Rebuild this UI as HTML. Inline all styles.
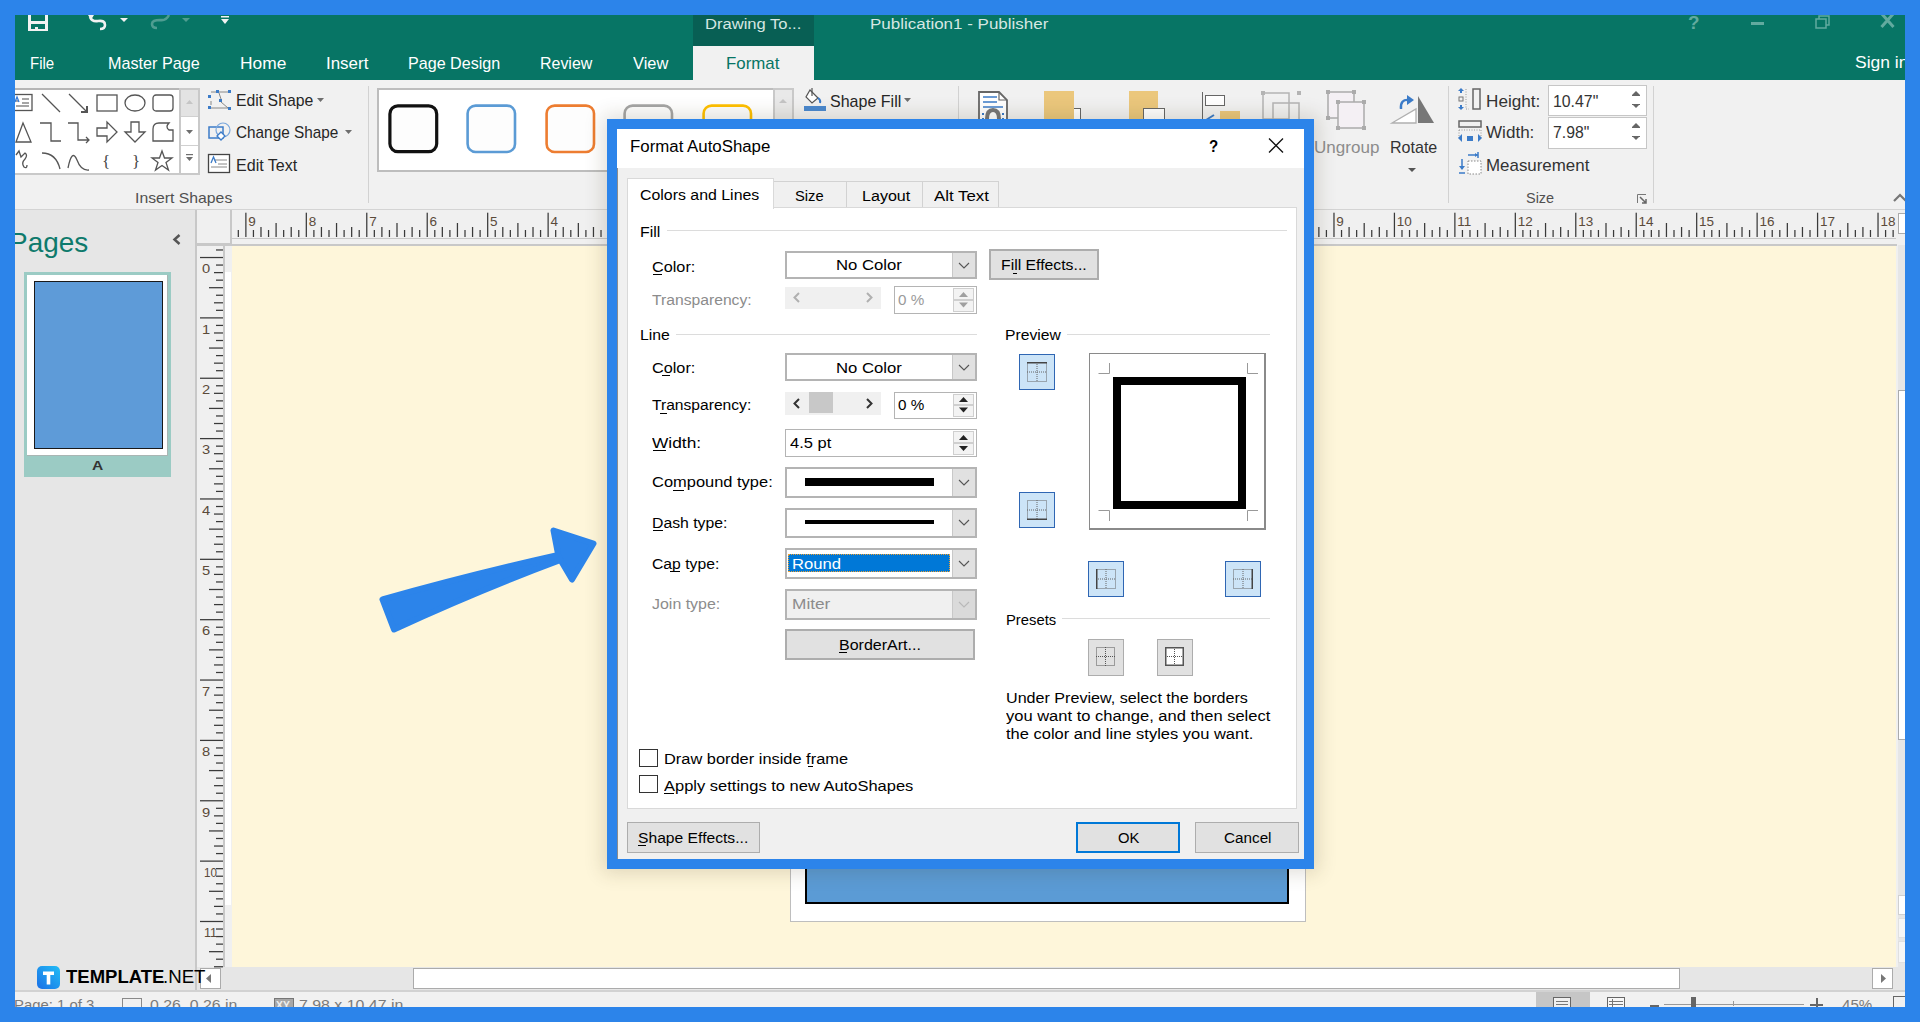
<!DOCTYPE html>
<html><head><meta charset="utf-8">
<style>
*{margin:0;padding:0;box-sizing:border-box}
html,body{width:1920px;height:1022px;overflow:hidden;background:#2C84EA}
body{position:relative;font-family:"Liberation Sans",sans-serif;color:#000}
.a{position:absolute}
.t{position:absolute;white-space:nowrap;line-height:1;transform-origin:0 0}
svg{overflow:visible}
</style></head><body>
<div class="a" style="left:15px;top:15px;width:1890px;height:65px;background:#077565;"></div>
<div class="a" style="left:693px;top:15px;width:121px;height:31px;background:#085F54;"></div>
<div class="a" style="left:693px;top:46px;width:121px;height:34px;background:#F1F1F1;"></div>
<div class="a" style="left:15px;top:80px;width:1890px;height:129px;background:#F1F1F1;"></div>
<div class="a" style="left:15px;top:209px;width:1890px;height:1px;background:#D4D4D4;"></div>
<div class="a" style="left:15px;top:210px;width:181px;height:782px;background:#E6E6E6;"></div>
<div class="a" style="left:197px;top:210px;width:1708px;height:35px;background:#F0F0F0;"></div>
<div class="a" style="left:197px;top:245px;width:35px;height:722px;background:#F0F0F0;"></div>
<div class="a" style="left:232px;top:246px;width:1665px;height:721px;background:#FEF6DA;"></div>
<div class="a" style="left:1896px;top:210px;width:9px;height:757px;background:#F0F0F0;"></div>
<div class="a" style="left:1898px;top:245px;width:7px;height:722px;background:#E6E6E6;"></div>
<div class="a" style="left:197px;top:967px;width:1708px;height:23px;background:#E6E6E6;"></div>
<div class="a" style="left:15px;top:990px;width:1890px;height:2px;background:#D2D2D2;"></div>
<div class="a" style="left:15px;top:992px;width:1890px;height:15px;background:#F1F1F1;"></div>
<svg class="a" style="left:28px;top:15px;" width="20" height="17" viewBox="0 0 20 17"><path d="M0 0V16H20V0M2 0V14H18V0" fill="none"/><rect x="0" y="-2" width="3" height="18" fill="#F2F2F2"/><rect x="17" y="-2" width="3" height="18" fill="#F2F2F2"/><rect x="0" y="14" width="20" height="2" fill="#F2F2F2"/><rect x="2" y="6" width="16" height="3" fill="#F2F2F2"/><rect x="7" y="12" width="3" height="2" fill="#F2F2F2"/></svg>
<svg class="a" style="left:88px;top:15px;" width="22" height="16" viewBox="0 0 22 16"><path d="M2 2 Q4 7 10 6 Q17 5 17 10 Q17 14 12 14" fill="none" stroke="#F2F2F2" stroke-width="2.6"/><path d="M0 0 L6 0 L3 5Z" fill="#F2F2F2"/></svg>
<svg class="a" style="left:120px;top:18px;" width="8" height="5" viewBox="0 0 8 5"><path d="M0 0H8L4 4Z" fill="#F2F2F2"/></svg>
<svg class="a" style="left:150px;top:15px;" width="22" height="16" viewBox="0 0 22 16"><path d="M19 0 Q16 6 10 5 Q2 5 2 9 Q2 13 7 13" fill="none" stroke="#4F9D91" stroke-width="2.6"/></svg>
<svg class="a" style="left:182px;top:18px;" width="8" height="5" viewBox="0 0 8 5"><path d="M0 0H8L4 4Z" fill="#4F9D91"/></svg>
<svg class="a" style="left:221px;top:16px;" width="8" height="9" viewBox="0 0 8 9"><rect x="0" y="0" width="8" height="1.5" fill="#F2F2F2"/><path d="M0 3H8L4 8Z" fill="#F2F2F2"/></svg>
<span class="t" style="transform:scaleX(1.0682);left:705.00px;top:15.88px;font-size:15.5px;color:#D6E7E3;">Drawing To...</span>
<span class="t" style="transform:scaleX(1.0953);left:870.00px;top:15.88px;font-size:15.5px;color:#D6E7E3;">Publication1 - Publisher</span>
<span class="t" style="transform:scaleX(0.9911);left:1688.00px;top:13.42px;font-size:19px;color:#62AA9F;font-weight:700;">?</span>
<div class="a" style="left:1751px;top:22px;width:13px;height:3px;background:#62AA9F;"></div>
<svg class="a" style="left:1815px;top:15px;" width="16" height="14" viewBox="0 0 16 14"><rect x="1" y="4" width="10" height="9" fill="none" stroke="#62AA9F" stroke-width="1.5"/><path d="M4 4V1H14V10H11" fill="none" stroke="#62AA9F" stroke-width="1.5"/></svg>
<svg class="a" style="left:1880px;top:15px;" width="15" height="14" viewBox="0 0 15 14"><path d="M1.5 -1.5L13.5 12M13.5 -1.5L1.5 12" stroke="#62AA9F" stroke-width="3"/></svg>
<span class="t" style="transform:scaleX(0.8830);left:30.00px;top:54.61px;font-size:17px;color:#FFFFFF;">File</span>
<span class="t" style="transform:scaleX(0.9523);left:107.50px;top:54.61px;font-size:17px;color:#FFFFFF;">Master Page</span>
<span class="t" style="transform:scaleX(1.0227);left:240.00px;top:54.61px;font-size:17px;color:#FFFFFF;">Home</span>
<span class="t" style="transform:scaleX(0.9958);left:326.00px;top:54.61px;font-size:17px;color:#FFFFFF;">Insert</span>
<span class="t" style="transform:scaleX(0.9481);left:408.00px;top:54.61px;font-size:17px;color:#FFFFFF;">Page Design</span>
<span class="t" style="transform:scaleX(0.9377);left:540.00px;top:54.61px;font-size:17px;color:#FFFFFF;">Review</span>
<span class="t" style="transform:scaleX(0.9663);left:633.00px;top:54.61px;font-size:17px;color:#FFFFFF;">View</span>
<span class="t" style="transform:scaleX(0.9908);left:726.00px;top:54.61px;font-size:17px;color:#077565;">Format</span>
<span class="t" style="transform:scaleX(1.0272);left:1855.00px;top:54.21px;font-size:17px;color:#FFFFFF;">Sign in</span>
<div class="a" style="left:195px;top:210px;width:2px;height:780px;background:#C8C8C8;"></div>
<div class="a" style="left:197px;top:244px;width:1700px;height:2px;background:#C8C8C8;"></div>
<div class="a" style="left:15px;top:88px;width:165px;height:87px;background:#FFFFFF;border-top:2px solid #B5B5B5;border-bottom:2px solid #C9C9C9;"></div>
<div class="a" style="left:179px;top:88px;width:21px;height:87px;background:#FFFFFF;border:2px solid #C9C9C9;"></div>
<div class="a" style="left:181px;top:90px;width:17px;height:26px;background:#E3E3E3;"></div>
<div class="a" style="left:181px;top:116px;width:17px;height:1px;background:#D0D0D0;"></div>
<div class="a" style="left:181px;top:145px;width:17px;height:1px;background:#D0D0D0;"></div>
<svg class="a" style="left:186px;top:100px;" width="7" height="4" viewBox="0 0 7 4"><path d="M0 4H7L3.5 0Z" fill="#C5C5C5"/></svg>
<svg class="a" style="left:186px;top:130px;" width="7" height="4" viewBox="0 0 7 4"><path d="M0 0H7L3.5 4Z" fill="#6E6E6E"/></svg>
<svg class="a" style="left:186px;top:154px;" width="7" height="8" viewBox="0 0 7 8"><rect x="0" y="0" width="7" height="1.2" fill="#6E6E6E"/><path d="M0 3H7L3.5 7Z" fill="#6E6E6E"/></svg>
<svg class="a" style="left:15px;top:94px;" width="18" height="17" viewBox="0 0 18 17"><rect x="-3" y="0.5" width="20" height="16" fill="none" stroke="#555" stroke-width="1.3"/><path d="M1 7H4M7 5H14M7 9H14M1 12H14" stroke="#888" stroke-width="1.3"/><path d="M0 8L2 3L4 8" stroke="#3A7BD5" fill="none" stroke-width="1.3"/></svg>
<svg class="a" style="left:41px;top:93px;" width="20" height="21" viewBox="0 0 20 21"><path d="M1 1L19 19" fill="none" stroke="#555" stroke-width="1.3"/></svg>
<svg class="a" style="left:68px;top:93px;" width="22" height="22" viewBox="0 0 22 22"><path d="M1 1L19 19" fill="none" stroke="#555" stroke-width="1.3"/><path d="M13 19H19V13" fill="none" stroke="#555" stroke-width="2"/></svg>
<svg class="a" style="left:96px;top:94px;" width="22" height="18" viewBox="0 0 22 18"><rect x="1" y="1" width="20" height="16" fill="none" stroke="#555" stroke-width="1.3"/></svg>
<svg class="a" style="left:124px;top:94px;" width="22" height="18" viewBox="0 0 22 18"><ellipse cx="11" cy="9" rx="10" ry="8" fill="none" stroke="#555" stroke-width="1.3"/></svg>
<svg class="a" style="left:152px;top:94px;" width="22" height="18" viewBox="0 0 22 18"><rect x="1" y="1" width="20" height="16" rx="3" fill="none" stroke="#555" stroke-width="1.3"/></svg>
<svg class="a" style="left:15px;top:121px;" width="18" height="22" viewBox="0 0 18 22"><path d="M1 21L8 2L16 21Z" fill="none" stroke="#555" stroke-width="1.3"/></svg>
<svg class="a" style="left:39px;top:122px;" width="23" height="20" viewBox="0 0 23 20"><path d="M1 1H12V19H22" fill="none" stroke="#555" stroke-width="1.3"/></svg>
<svg class="a" style="left:67px;top:122px;" width="24" height="22" viewBox="0 0 24 22"><path d="M1 1H11V18H22M19 15L22 18L19 21" fill="none" stroke="#555" stroke-width="1.3"/></svg>
<svg class="a" style="left:96px;top:121px;" width="22" height="22" viewBox="0 0 22 22"><path d="M1 7H11V1L21 11L11 21V15H1Z" fill="none" stroke="#555" stroke-width="1.3"/></svg>
<svg class="a" style="left:124px;top:121px;" width="22" height="22" viewBox="0 0 22 22"><path d="M7 1H15V11H21L11 21L1 11H7Z" fill="none" stroke="#555" stroke-width="1.3"/></svg>
<svg class="a" style="left:152px;top:122px;" width="22" height="20" viewBox="0 0 22 20"><path d="M1 19V7Q1 1 7 1H17Q13 5 17 8H21V19Z" fill="none" stroke="#555" stroke-width="1.3"/></svg>
<svg class="a" style="left:15px;top:149px;" width="18" height="22" viewBox="0 0 18 22"><path d="M1 6L4 2L6 8L10 4Q13 6 10 10Q6 14 9 18Q12 20 12 16" fill="none" stroke="#555" stroke-width="1.3"/></svg>
<svg class="a" style="left:41px;top:152px;" width="21" height="18" viewBox="0 0 21 18"><path d="M1 1Q15 1 19 17" fill="none" stroke="#555" stroke-width="1.3"/></svg>
<svg class="a" style="left:67px;top:152px;" width="24" height="19" viewBox="0 0 24 19"><path d="M1 16Q5 -4 10 8Q14 19 22 18" fill="none" stroke="#555" stroke-width="1.3"/></svg>
<span class="t" style="left:102.00px;top:153.11px;font-size:17px;color:#444;font-family:'Liberation Serif';">{</span>
<span class="t" style="left:132.00px;top:153.11px;font-size:17px;color:#444;font-family:'Liberation Serif';">}</span>
<svg class="a" style="left:151px;top:150px;" width="22" height="21" viewBox="0 0 22 21"><path d="M11 1L13.5 8H21L15 12.5L17.5 20L11 15.5L4.5 20L7 12.5L1 8H8.5Z" fill="none" stroke="#555" stroke-width="1.3"/></svg>
<svg class="a" style="left:208px;top:90px;" width="24" height="20" viewBox="0 0 24 20"><g fill="#3B7BC8"><rect x="0" y="5" width="3" height="3"/><rect x="0" y="16" width="3" height="3"/><rect x="8" y="0" width="3" height="3"/><rect x="20" y="0" width="3" height="3"/><rect x="20" y="17" width="3" height="3"/><rect x="11" y="9" width="3" height="3"/></g><path d="M3 2H8M11 2H20M3 11V15M3 18H20M11 3L13 9M13 12L20 18" stroke="#888" stroke-width="1"/></svg>
<span class="t" style="transform:scaleX(0.9288);left:236.00px;top:92.11px;font-size:17px;color:#262626;">Edit Shape</span>
<svg class="a" style="left:317px;top:98px;" width="7" height="4" viewBox="0 0 7 4"><path d="M0 0H7L3.5 4Z" fill="#6E6E6E"/></svg>
<svg class="a" style="left:208px;top:121px;" width="24" height="22" viewBox="0 0 24 22"><rect x="1" y="6" width="14" height="11" fill="none" stroke="#3B7BC8" stroke-width="1.5"/><circle cx="15" cy="9" r="7" fill="none" stroke="#7AA7DC" stroke-width="1.2"/><path d="M13 11L17 15L13 19L9 15Z" fill="#FFF" stroke="#3B7BC8" stroke-width="1.3"/></svg>
<span class="t" style="transform:scaleX(0.9012);left:236.00px;top:124.11px;font-size:17px;color:#262626;">Change Shape</span>
<svg class="a" style="left:345px;top:130px;" width="7" height="4" viewBox="0 0 7 4"><path d="M0 0H7L3.5 4Z" fill="#6E6E6E"/></svg>
<svg class="a" style="left:208px;top:154px;" width="22" height="19" viewBox="0 0 22 19"><rect x="0.5" y="0.5" width="21" height="18" fill="#FFF" stroke="#444" stroke-width="1.3"/><path d="M6 6H19M10 10H19M3 13H19" stroke="#888" stroke-width="1"/><path d="M3 9L5.5 3L8 9" fill="none" stroke="#3B7BC8" stroke-width="1.3"/></svg>
<span class="t" style="transform:scaleX(0.9444);left:236.00px;top:156.61px;font-size:17px;color:#262626;">Edit Text</span>
<span class="t" style="transform:scaleX(1.0508);left:135.00px;top:190.30px;font-size:15px;color:#505050;">Insert Shapes</span>
<div class="a" style="left:368px;top:86px;width:1px;height:117px;background:#D2D2D2;"></div>
<div class="a" style="left:377px;top:88px;width:397px;height:84px;background:#FFFFFF;border:2px solid #BDBDBD;border-right:none;"></div>
<div class="a" style="left:773px;top:88px;width:21px;height:84px;background:#E9E9E9;border:2px solid #C9C9C9;"></div>
<svg class="a" style="left:779px;top:99px;" width="8" height="4" viewBox="0 0 8 4"><path d="M0 4H8L4 0Z" fill="#C5C5C5"/></svg>
<svg class="a" style="left:388px;top:104px;" width="51" height="50" viewBox="0 0 51 50"><rect x="1.9000000000000001" y="1.9000000000000001" width="46.8" height="45.8" rx="8" fill="#FDFDFD" stroke="#111111" stroke-width="3.2"/></svg>
<svg class="a" style="left:466px;top:104px;" width="51" height="50" viewBox="0 0 51 50"><rect x="1.6" y="1.6" width="47.4" height="46.4" rx="8" fill="#FDFDFD" stroke="#5B9BD5" stroke-width="2.6"/></svg>
<svg class="a" style="left:545px;top:104px;" width="51" height="50" viewBox="0 0 51 50"><rect x="1.6" y="1.6" width="47.4" height="46.4" rx="8" fill="#FDFDFD" stroke="#ED7D31" stroke-width="2.6"/></svg>
<svg class="a" style="left:623px;top:104px;" width="51" height="50" viewBox="0 0 51 50"><rect x="1.6" y="1.6" width="47.4" height="46.4" rx="8" fill="#FDFDFD" stroke="#A5A5A5" stroke-width="2.6"/></svg>
<svg class="a" style="left:702px;top:104px;" width="51" height="50" viewBox="0 0 51 50"><rect x="1.6" y="1.6" width="47.4" height="46.4" rx="8" fill="#FDFDFD" stroke="#FFC000" stroke-width="2.6"/></svg>
<svg class="a" style="left:803px;top:88px;" width="26" height="23" viewBox="0 0 26 23"><path d="M7 2L15 10L9 15L3 9Z" fill="#FFF" stroke="#555" stroke-width="1.2"/><path d="M9 0V8" stroke="#555" stroke-width="1.2"/><path d="M15 10Q18 12 17 15" stroke="#3B7BC8" stroke-width="2" fill="none"/><rect x="1" y="18" width="22" height="5" fill="#4A88CF"/></svg>
<span class="t" style="transform:scaleX(0.9428);left:830.00px;top:92.61px;font-size:17px;color:#262626;">Shape Fill</span>
<svg class="a" style="left:904px;top:98px;" width="7" height="4" viewBox="0 0 7 4"><path d="M0 0H7L3.5 4Z" fill="#6E6E6E"/></svg>
<div class="a" style="left:958px;top:86px;width:1px;height:117px;background:#D2D2D2;"></div>
<svg class="a" style="left:978px;top:91px;" width="31" height="40" viewBox="0 0 31 40"><path d="M1 1H21L29 9V38H1Z" fill="#FFF" stroke="#666" stroke-width="1.8"/><path d="M21 1V9H29" fill="none" stroke="#666" stroke-width="1.2"/><path d="M5 6H19M5 11H19M5 16H25" stroke="#3B7BC8" stroke-width="1.5"/><path d="M9 28Q9 19 15 19Q21 19 21 28" fill="none" stroke="#777" stroke-width="4"/><g fill="#3B7BC8"><rect x="4" y="22" width="2" height="2"/><rect x="24" y="22" width="2" height="2"/><rect x="4" y="27" width="2" height="2"/><rect x="24" y="27" width="2" height="2"/></g></svg>
<div class="a" style="left:1073px;top:108px;width:8px;height:25px;background:#FFF;border:1.5px solid #666;"></div>
<div class="a" style="left:1044px;top:91px;width:30px;height:40px;background:#EBC77C;"></div>
<div class="a" style="left:1129px;top:91px;width:29px;height:40px;background:#EBC77C;"></div>
<div class="a" style="left:1143px;top:108px;width:22px;height:25px;background:#FFF;border:1.5px solid #666;"></div>
<div class="a" style="left:1202px;top:92px;width:1px;height:35px;background:#666;"></div>
<div class="a" style="left:1205px;top:95px;width:20px;height:11px;background:#FFF;border:1.5px solid #666;"></div>
<div class="a" style="left:1220px;top:111px;width:20px;height:20px;background:#EBC77C;"></div>
<svg class="a" style="left:1206px;top:114px;" width="9" height="6" viewBox="0 0 9 6"><path d="M0 6L8 1" stroke="#3B7BC8" stroke-width="2"/></svg>
<svg class="a" style="left:1261px;top:91px;" width="40" height="40" viewBox="0 0 40 40"><g fill="none" stroke="#B4B4B4" stroke-width="1.5"><rect x="2" y="2" width="26" height="26"/><rect x="12" y="12" width="26" height="26"/></g><g fill="#B4B4B4"><rect x="0" y="0" width="4" height="4"/><rect x="36" y="0" width="4" height="4"/></g></svg>
<svg class="a" style="left:1326px;top:90px;" width="42" height="42" viewBox="0 0 42 42"><rect x="2" y="2" width="26" height="26" fill="#F4F0F4" stroke="#ABABAB" stroke-width="1.5"/><rect x="12" y="12" width="26" height="26" fill="#F4F0F4" stroke="#ABABAB" stroke-width="1.5"/><g fill="#ABABAB"><rect x="0" y="0" width="4" height="4"/><rect x="26" y="0" width="4" height="4"/><rect x="0" y="26" width="4" height="4"/><rect x="10" y="10" width="4" height="4"/><rect x="36" y="10" width="4" height="4"/><rect x="10" y="36" width="4" height="4"/><rect x="36" y="36" width="4" height="4"/></g></svg>
<span class="t" style="transform:scaleX(1.0022);left:1314.00px;top:139.11px;font-size:17px;color:#8C8C8C;">Ungroup</span>
<svg class="a" style="left:1390px;top:94px;" width="46" height="30" viewBox="0 0 46 30"><path d="M2 29L26 15V29Z" fill="#FFF" stroke="#B0B0B0" stroke-width="1.3"/><path d="M28 2L44 29H28Z" fill="#777"/><path d="M11 15Q10 5 19 6" fill="none" stroke="#3B7BC8" stroke-width="2.4"/><path d="M17 1L24 6L17 11Z" fill="#3B7BC8"/></svg>
<span class="t" style="transform:scaleX(0.9439);left:1390.00px;top:139.11px;font-size:17px;color:#333333;">Rotate</span>
<svg class="a" style="left:1408px;top:168px;" width="8" height="5" viewBox="0 0 8 5"><path d="M0 0H8L4 4Z" fill="#555"/></svg>
<div class="a" style="left:1448px;top:86px;width:1px;height:117px;background:#D2D2D2;"></div>
<svg class="a" style="left:1458px;top:88px;" width="24" height="22" viewBox="0 0 24 22"><g fill="#3B7BC8"><path d="M3 0L6 3H0Z"/><rect x="2" y="2" width="2" height="3"/><path d="M3 22L6 19H0Z"/><rect x="2" y="17" width="2" height="3"/></g><rect x="1" y="9" width="4" height="4" fill="none" stroke="#777" stroke-width="1"/><path d="M8 1V21M8 21H11" stroke="#999" stroke-dasharray="1 1.5"/><rect x="15" y="1" width="7" height="20" fill="none" stroke="#666" stroke-width="1.5"/></svg>
<span class="t" style="transform:scaleX(1.0092);left:1486.00px;top:92.61px;font-size:17px;color:#333333;">Height:</span>
<div class="a" style="left:1548px;top:85px;width:99px;height:31px;background:#FFF;border:1.5px solid #C6C6C6;"></div>
<span class="t" style="transform:scaleX(0.9318);left:1552.50px;top:92.61px;font-size:17px;color:#333333;">10.47"</span>
<svg class="a" style="left:1632px;top:91px;" width="8" height="17" viewBox="0 0 8 17"><path d="M0 4H8L4 0Z" fill="#666"/><path d="M0 13H8L4 17Z" fill="#666"/><rect x="0" y="4" width="8" height="1" fill="#666"/><rect x="0" y="13" width="8" height="1" fill="#666"/></svg>
<svg class="a" style="left:1458px;top:120px;" width="24" height="24" viewBox="0 0 24 24"><rect x="1" y="1" width="22" height="6" fill="none" stroke="#666" stroke-width="1.5"/><path d="M1 10V18M23 10V18M1 10H23" stroke="#999" stroke-dasharray="1 1.5"/><g fill="#3B7BC8"><path d="M0 18L4 14V22Z"/><path d="M24 18L20 14V22Z"/><rect x="9" y="16" width="6" height="5"/></g></svg>
<span class="t" style="transform:scaleX(1.0037);left:1486.00px;top:123.61px;font-size:17px;color:#333333;">Width:</span>
<div class="a" style="left:1548px;top:117px;width:99px;height:32px;background:#FFF;border:1.5px solid #C6C6C6;"></div>
<span class="t" style="transform:scaleX(0.9268);left:1552.50px;top:123.61px;font-size:17px;color:#333333;">7.98"</span>
<svg class="a" style="left:1632px;top:123px;" width="8" height="17" viewBox="0 0 8 17"><path d="M0 4H8L4 0Z" fill="#666"/><path d="M0 13H8L4 17Z" fill="#666"/><rect x="0" y="4" width="8" height="1" fill="#666"/><rect x="0" y="13" width="8" height="1" fill="#666"/></svg>
<svg class="a" style="left:1458px;top:152px;" width="24" height="23" viewBox="0 0 24 23"><path d="M10 3H20M20 0V6" stroke="#3B7BC8" stroke-width="1.5"/><path d="M17 1L20 3L17 5Z" fill="#3B7BC8"/><path d="M4 7V17M1 21H7" stroke="#3B7BC8" stroke-width="1.5"/><path d="M1 14L4 18L7 14Z" fill="#3B7BC8"/><rect x="10" y="9" width="13" height="13" fill="#FFF" stroke="#888" stroke-width="1" stroke-dasharray="1.5 1.5"/></svg>
<span class="t" style="transform:scaleX(0.9944);left:1486.00px;top:156.61px;font-size:17px;color:#333333;">Measurement</span>
<span class="t" style="transform:scaleX(0.9647);left:1525.50px;top:190.30px;font-size:15px;color:#505050;">Size</span>
<svg class="a" style="left:1637px;top:194px;" width="11" height="10" viewBox="0 0 11 10"><path d="M0.5 9V0.5H9" fill="none" stroke="#777" stroke-width="1"/><path d="M3 3L9 9M5 9H9V5" fill="none" stroke="#666" stroke-width="1.5"/></svg>
<div class="a" style="left:1653px;top:86px;width:1px;height:117px;background:#D2D2D2;"></div>
<svg class="a" style="left:1893px;top:194px;" width="14" height="8" viewBox="0 0 14 8"><path d="M1 7L7 1L13 7" fill="none" stroke="#777" stroke-width="2.2"/></svg>
<span class="t" style="transform:scaleX(1.0160);left:9.00px;top:228.72px;font-size:27.5px;color:#0E7A6C;">Pages</span>
<svg class="a" style="left:173px;top:234px;" width="8" height="11" viewBox="0 0 8 11"><path d="M6.5 1L1.5 5.5L6.5 10" fill="none" stroke="#555" stroke-width="2.5"/></svg>
<div class="a" style="left:24px;top:272px;width:147px;height:205px;background:#9BCBC4;"></div>
<div class="a" style="left:27px;top:275px;width:141px;height:181px;background:#FFFFFF;border-right:1px solid #A9B5B3;border-bottom:1px solid #A9B5B3;"></div>
<div class="a" style="left:34px;top:281px;width:129px;height:168px;background:#5E9BD8;border:1px solid #1A1A1A;"></div>
<span class="t" style="transform:scaleX(1.1975);left:92.00px;top:459.00px;font-size:13px;color:#333;font-weight:700;">A</span>
<svg class="a" style="left:232px;top:210px;" width="1664" height="30" viewBox="0 0 1664 30"><g fill="#3A3A3A"><rect x="5.69" y="20.00" width="1.25" height="7.00"/><rect x="13.25" y="2.70" width="1.25" height="24.30"/><rect x="20.81" y="20.00" width="1.25" height="7.00"/><rect x="28.36" y="17.00" width="1.25" height="10.00"/><rect x="35.92" y="20.00" width="1.25" height="7.00"/><rect x="43.47" y="13.00" width="1.25" height="14.00"/><rect x="51.03" y="20.00" width="1.25" height="7.00"/><rect x="58.59" y="17.00" width="1.25" height="10.00"/><rect x="66.14" y="20.00" width="1.25" height="7.00"/><rect x="73.70" y="2.70" width="1.25" height="24.30"/><rect x="81.26" y="20.00" width="1.25" height="7.00"/><rect x="88.81" y="17.00" width="1.25" height="10.00"/><rect x="96.37" y="20.00" width="1.25" height="7.00"/><rect x="103.92" y="13.00" width="1.25" height="14.00"/><rect x="111.48" y="20.00" width="1.25" height="7.00"/><rect x="119.04" y="17.00" width="1.25" height="10.00"/><rect x="126.59" y="20.00" width="1.25" height="7.00"/><rect x="134.15" y="2.70" width="1.25" height="24.30"/><rect x="141.71" y="20.00" width="1.25" height="7.00"/><rect x="149.26" y="17.00" width="1.25" height="10.00"/><rect x="156.82" y="20.00" width="1.25" height="7.00"/><rect x="164.37" y="13.00" width="1.25" height="14.00"/><rect x="171.93" y="20.00" width="1.25" height="7.00"/><rect x="179.49" y="17.00" width="1.25" height="10.00"/><rect x="187.04" y="20.00" width="1.25" height="7.00"/><rect x="194.60" y="2.70" width="1.25" height="24.30"/><rect x="202.16" y="20.00" width="1.25" height="7.00"/><rect x="209.71" y="17.00" width="1.25" height="10.00"/><rect x="217.27" y="20.00" width="1.25" height="7.00"/><rect x="224.82" y="13.00" width="1.25" height="14.00"/><rect x="232.38" y="20.00" width="1.25" height="7.00"/><rect x="239.94" y="17.00" width="1.25" height="10.00"/><rect x="247.49" y="20.00" width="1.25" height="7.00"/><rect x="255.05" y="2.70" width="1.25" height="24.30"/><rect x="262.61" y="20.00" width="1.25" height="7.00"/><rect x="270.16" y="17.00" width="1.25" height="10.00"/><rect x="277.72" y="20.00" width="1.25" height="7.00"/><rect x="285.27" y="13.00" width="1.25" height="14.00"/><rect x="292.83" y="20.00" width="1.25" height="7.00"/><rect x="300.39" y="17.00" width="1.25" height="10.00"/><rect x="307.94" y="20.00" width="1.25" height="7.00"/><rect x="315.50" y="2.70" width="1.25" height="24.30"/><rect x="323.06" y="20.00" width="1.25" height="7.00"/><rect x="330.61" y="17.00" width="1.25" height="10.00"/><rect x="338.17" y="20.00" width="1.25" height="7.00"/><rect x="345.72" y="13.00" width="1.25" height="14.00"/><rect x="353.28" y="20.00" width="1.25" height="7.00"/><rect x="360.84" y="17.00" width="1.25" height="10.00"/><rect x="368.39" y="20.00" width="1.25" height="7.00"/><rect x="375.95" y="2.70" width="1.25" height="24.30"/><rect x="383.51" y="20.00" width="1.25" height="7.00"/><rect x="391.06" y="17.00" width="1.25" height="10.00"/><rect x="398.62" y="20.00" width="1.25" height="7.00"/><rect x="406.17" y="13.00" width="1.25" height="14.00"/><rect x="413.73" y="20.00" width="1.25" height="7.00"/><rect x="421.29" y="17.00" width="1.25" height="10.00"/><rect x="428.84" y="20.00" width="1.25" height="7.00"/><rect x="436.40" y="2.70" width="1.25" height="24.30"/><rect x="443.96" y="20.00" width="1.25" height="7.00"/><rect x="451.51" y="17.00" width="1.25" height="10.00"/><rect x="459.07" y="20.00" width="1.25" height="7.00"/><rect x="466.62" y="13.00" width="1.25" height="14.00"/><rect x="474.18" y="20.00" width="1.25" height="7.00"/><rect x="481.74" y="17.00" width="1.25" height="10.00"/><rect x="489.29" y="20.00" width="1.25" height="7.00"/><rect x="496.85" y="2.70" width="1.25" height="24.30"/><rect x="504.41" y="20.00" width="1.25" height="7.00"/><rect x="511.96" y="17.00" width="1.25" height="10.00"/><rect x="519.52" y="20.00" width="1.25" height="7.00"/><rect x="527.07" y="13.00" width="1.25" height="14.00"/><rect x="534.63" y="20.00" width="1.25" height="7.00"/><rect x="542.19" y="17.00" width="1.25" height="10.00"/><rect x="549.74" y="20.00" width="1.25" height="7.00"/><rect x="557.30" y="2.70" width="1.25" height="24.30"/><rect x="564.86" y="20.00" width="1.25" height="7.00"/><rect x="572.41" y="17.00" width="1.25" height="10.00"/><rect x="579.97" y="20.00" width="1.25" height="7.00"/><rect x="587.52" y="13.00" width="1.25" height="14.00"/><rect x="595.08" y="20.00" width="1.25" height="7.00"/><rect x="602.64" y="17.00" width="1.25" height="10.00"/><rect x="610.19" y="20.00" width="1.25" height="7.00"/><rect x="617.75" y="2.70" width="1.25" height="24.30"/><rect x="625.31" y="20.00" width="1.25" height="7.00"/><rect x="632.86" y="17.00" width="1.25" height="10.00"/><rect x="640.42" y="20.00" width="1.25" height="7.00"/><rect x="647.97" y="13.00" width="1.25" height="14.00"/><rect x="655.53" y="20.00" width="1.25" height="7.00"/><rect x="663.09" y="17.00" width="1.25" height="10.00"/><rect x="670.64" y="20.00" width="1.25" height="7.00"/><rect x="678.20" y="2.70" width="1.25" height="24.30"/><rect x="685.76" y="20.00" width="1.25" height="7.00"/><rect x="693.31" y="17.00" width="1.25" height="10.00"/><rect x="700.87" y="20.00" width="1.25" height="7.00"/><rect x="708.42" y="13.00" width="1.25" height="14.00"/><rect x="715.98" y="20.00" width="1.25" height="7.00"/><rect x="723.54" y="17.00" width="1.25" height="10.00"/><rect x="731.09" y="20.00" width="1.25" height="7.00"/><rect x="738.65" y="2.70" width="1.25" height="24.30"/><rect x="746.21" y="20.00" width="1.25" height="7.00"/><rect x="753.76" y="17.00" width="1.25" height="10.00"/><rect x="761.32" y="20.00" width="1.25" height="7.00"/><rect x="768.88" y="13.00" width="1.25" height="14.00"/><rect x="776.43" y="20.00" width="1.25" height="7.00"/><rect x="783.99" y="17.00" width="1.25" height="10.00"/><rect x="791.54" y="20.00" width="1.25" height="7.00"/><rect x="799.10" y="2.70" width="1.25" height="24.30"/><rect x="806.66" y="20.00" width="1.25" height="7.00"/><rect x="814.21" y="17.00" width="1.25" height="10.00"/><rect x="821.77" y="20.00" width="1.25" height="7.00"/><rect x="829.33" y="13.00" width="1.25" height="14.00"/><rect x="836.88" y="20.00" width="1.25" height="7.00"/><rect x="844.44" y="17.00" width="1.25" height="10.00"/><rect x="851.99" y="20.00" width="1.25" height="7.00"/><rect x="859.55" y="2.70" width="1.25" height="24.30"/><rect x="867.11" y="20.00" width="1.25" height="7.00"/><rect x="874.66" y="17.00" width="1.25" height="10.00"/><rect x="882.22" y="20.00" width="1.25" height="7.00"/><rect x="889.78" y="13.00" width="1.25" height="14.00"/><rect x="897.33" y="20.00" width="1.25" height="7.00"/><rect x="904.89" y="17.00" width="1.25" height="10.00"/><rect x="912.44" y="20.00" width="1.25" height="7.00"/><rect x="920.00" y="2.70" width="1.25" height="24.30"/><rect x="927.56" y="20.00" width="1.25" height="7.00"/><rect x="935.11" y="17.00" width="1.25" height="10.00"/><rect x="942.67" y="20.00" width="1.25" height="7.00"/><rect x="950.22" y="13.00" width="1.25" height="14.00"/><rect x="957.78" y="20.00" width="1.25" height="7.00"/><rect x="965.34" y="17.00" width="1.25" height="10.00"/><rect x="972.89" y="20.00" width="1.25" height="7.00"/><rect x="980.45" y="2.70" width="1.25" height="24.30"/><rect x="988.01" y="20.00" width="1.25" height="7.00"/><rect x="995.56" y="17.00" width="1.25" height="10.00"/><rect x="1003.12" y="20.00" width="1.25" height="7.00"/><rect x="1010.67" y="13.00" width="1.25" height="14.00"/><rect x="1018.23" y="20.00" width="1.25" height="7.00"/><rect x="1025.79" y="17.00" width="1.25" height="10.00"/><rect x="1033.34" y="20.00" width="1.25" height="7.00"/><rect x="1040.90" y="2.70" width="1.25" height="24.30"/><rect x="1048.46" y="20.00" width="1.25" height="7.00"/><rect x="1056.01" y="17.00" width="1.25" height="10.00"/><rect x="1063.57" y="20.00" width="1.25" height="7.00"/><rect x="1071.12" y="13.00" width="1.25" height="14.00"/><rect x="1078.68" y="20.00" width="1.25" height="7.00"/><rect x="1086.24" y="17.00" width="1.25" height="10.00"/><rect x="1093.79" y="20.00" width="1.25" height="7.00"/><rect x="1101.35" y="2.70" width="1.25" height="24.30"/><rect x="1108.91" y="20.00" width="1.25" height="7.00"/><rect x="1116.46" y="17.00" width="1.25" height="10.00"/><rect x="1124.02" y="20.00" width="1.25" height="7.00"/><rect x="1131.57" y="13.00" width="1.25" height="14.00"/><rect x="1139.13" y="20.00" width="1.25" height="7.00"/><rect x="1146.69" y="17.00" width="1.25" height="10.00"/><rect x="1154.24" y="20.00" width="1.25" height="7.00"/><rect x="1161.80" y="2.70" width="1.25" height="24.30"/><rect x="1169.36" y="20.00" width="1.25" height="7.00"/><rect x="1176.91" y="20.00" width="1.25" height="7.00"/><rect x="1184.47" y="20.00" width="1.25" height="7.00"/><rect x="1192.03" y="13.00" width="1.25" height="14.00"/><rect x="1199.58" y="20.00" width="1.25" height="7.00"/><rect x="1207.14" y="17.00" width="1.25" height="10.00"/><rect x="1214.69" y="20.00" width="1.25" height="7.00"/><rect x="1222.25" y="2.70" width="1.25" height="24.30"/><rect x="1229.81" y="20.00" width="1.25" height="7.00"/><rect x="1237.36" y="20.00" width="1.25" height="7.00"/><rect x="1244.92" y="20.00" width="1.25" height="7.00"/><rect x="1252.47" y="13.00" width="1.25" height="14.00"/><rect x="1260.03" y="20.00" width="1.25" height="7.00"/><rect x="1267.59" y="17.00" width="1.25" height="10.00"/><rect x="1275.14" y="20.00" width="1.25" height="7.00"/><rect x="1282.70" y="2.70" width="1.25" height="24.30"/><rect x="1290.26" y="20.00" width="1.25" height="7.00"/><rect x="1297.81" y="20.00" width="1.25" height="7.00"/><rect x="1305.37" y="20.00" width="1.25" height="7.00"/><rect x="1312.92" y="13.00" width="1.25" height="14.00"/><rect x="1320.48" y="20.00" width="1.25" height="7.00"/><rect x="1328.04" y="17.00" width="1.25" height="10.00"/><rect x="1335.59" y="20.00" width="1.25" height="7.00"/><rect x="1343.15" y="2.70" width="1.25" height="24.30"/><rect x="1350.71" y="20.00" width="1.25" height="7.00"/><rect x="1358.26" y="20.00" width="1.25" height="7.00"/><rect x="1365.82" y="20.00" width="1.25" height="7.00"/><rect x="1373.38" y="13.00" width="1.25" height="14.00"/><rect x="1380.93" y="20.00" width="1.25" height="7.00"/><rect x="1388.49" y="17.00" width="1.25" height="10.00"/><rect x="1396.04" y="20.00" width="1.25" height="7.00"/><rect x="1403.60" y="2.70" width="1.25" height="24.30"/><rect x="1411.16" y="20.00" width="1.25" height="7.00"/><rect x="1418.71" y="20.00" width="1.25" height="7.00"/><rect x="1426.27" y="20.00" width="1.25" height="7.00"/><rect x="1433.83" y="13.00" width="1.25" height="14.00"/><rect x="1441.38" y="20.00" width="1.25" height="7.00"/><rect x="1448.94" y="17.00" width="1.25" height="10.00"/><rect x="1456.49" y="20.00" width="1.25" height="7.00"/><rect x="1464.05" y="2.70" width="1.25" height="24.30"/><rect x="1471.61" y="20.00" width="1.25" height="7.00"/><rect x="1479.16" y="20.00" width="1.25" height="7.00"/><rect x="1486.72" y="20.00" width="1.25" height="7.00"/><rect x="1494.28" y="13.00" width="1.25" height="14.00"/><rect x="1501.83" y="20.00" width="1.25" height="7.00"/><rect x="1509.39" y="17.00" width="1.25" height="10.00"/><rect x="1516.94" y="20.00" width="1.25" height="7.00"/><rect x="1524.50" y="2.70" width="1.25" height="24.30"/><rect x="1532.06" y="20.00" width="1.25" height="7.00"/><rect x="1539.61" y="20.00" width="1.25" height="7.00"/><rect x="1547.17" y="20.00" width="1.25" height="7.00"/><rect x="1554.72" y="13.00" width="1.25" height="14.00"/><rect x="1562.28" y="20.00" width="1.25" height="7.00"/><rect x="1569.84" y="17.00" width="1.25" height="10.00"/><rect x="1577.39" y="20.00" width="1.25" height="7.00"/><rect x="1584.95" y="2.70" width="1.25" height="24.30"/><rect x="1592.51" y="20.00" width="1.25" height="7.00"/><rect x="1600.06" y="20.00" width="1.25" height="7.00"/><rect x="1607.62" y="20.00" width="1.25" height="7.00"/><rect x="1615.17" y="13.00" width="1.25" height="14.00"/><rect x="1622.73" y="20.00" width="1.25" height="7.00"/><rect x="1630.29" y="17.00" width="1.25" height="10.00"/><rect x="1637.84" y="20.00" width="1.25" height="7.00"/><rect x="1645.40" y="2.70" width="1.25" height="24.30"/><rect x="1652.96" y="20.00" width="1.25" height="7.00"/><rect x="1660.51" y="20.00" width="1.25" height="7.00"/></g></svg>
<span class="t" style="left:248.25px;top:215.37px;font-size:13.5px;color:#5A4A3A;">9</span>
<span class="t" style="left:308.70px;top:215.37px;font-size:13.5px;color:#5A4A3A;">8</span>
<span class="t" style="left:369.15px;top:215.37px;font-size:13.5px;color:#5A4A3A;">7</span>
<span class="t" style="left:429.60px;top:215.37px;font-size:13.5px;color:#5A4A3A;">6</span>
<span class="t" style="left:490.05px;top:215.37px;font-size:13.5px;color:#5A4A3A;">5</span>
<span class="t" style="left:550.50px;top:215.37px;font-size:13.5px;color:#5A4A3A;">4</span>
<span class="t" style="left:610.95px;top:215.37px;font-size:13.5px;color:#5A4A3A;">3</span>
<span class="t" style="left:671.40px;top:215.37px;font-size:13.5px;color:#5A4A3A;">2</span>
<span class="t" style="left:731.85px;top:215.37px;font-size:13.5px;color:#5A4A3A;">1</span>
<span class="t" style="left:852.75px;top:215.37px;font-size:13.5px;color:#5A4A3A;">1</span>
<span class="t" style="left:913.20px;top:215.37px;font-size:13.5px;color:#5A4A3A;">2</span>
<span class="t" style="left:973.65px;top:215.37px;font-size:13.5px;color:#5A4A3A;">3</span>
<span class="t" style="left:1034.10px;top:215.37px;font-size:13.5px;color:#5A4A3A;">4</span>
<span class="t" style="left:1094.55px;top:215.37px;font-size:13.5px;color:#5A4A3A;">5</span>
<span class="t" style="left:1155.00px;top:215.37px;font-size:13.5px;color:#5A4A3A;">6</span>
<span class="t" style="left:1215.45px;top:215.37px;font-size:13.5px;color:#5A4A3A;">7</span>
<span class="t" style="left:1275.90px;top:215.37px;font-size:13.5px;color:#5A4A3A;">8</span>
<span class="t" style="left:1336.35px;top:215.37px;font-size:13.5px;color:#5A4A3A;">9</span>
<span class="t" style="left:1396.80px;top:215.37px;font-size:13.5px;color:#5A4A3A;">10</span>
<span class="t" style="left:1457.25px;top:215.37px;font-size:13.5px;color:#5A4A3A;">11</span>
<span class="t" style="left:1517.70px;top:215.37px;font-size:13.5px;color:#5A4A3A;">12</span>
<span class="t" style="left:1578.15px;top:215.37px;font-size:13.5px;color:#5A4A3A;">13</span>
<span class="t" style="left:1638.60px;top:215.37px;font-size:13.5px;color:#5A4A3A;">14</span>
<span class="t" style="left:1699.05px;top:215.37px;font-size:13.5px;color:#5A4A3A;">15</span>
<span class="t" style="left:1759.50px;top:215.37px;font-size:13.5px;color:#5A4A3A;">16</span>
<span class="t" style="left:1819.95px;top:215.37px;font-size:13.5px;color:#5A4A3A;">17</span>
<span class="t" style="left:1880.40px;top:215.37px;font-size:13.5px;color:#5A4A3A;">18</span>
<div class="a" style="left:232px;top:238px;width:1664px;height:1px;background:#C8C8C8;"></div>
<div class="a" style="left:231px;top:210px;width:1px;height:35px;background:#C8C8C8;"></div>
<div class="a" style="left:197px;top:210px;width:34px;height:34px;background:#F0F0F0;border-right:1px solid #C8C8C8;border-bottom:1px solid #C8C8C8;"></div>
<svg class="a" style="left:197px;top:246px;" width="27" height="721" viewBox="0 0 27 721"><g fill="#3A3A3A"><rect x="19" y="3.35" width="7" height="1.25"/><rect x="3" y="10.90" width="23" height="1.25"/><rect x="19" y="18.44" width="7" height="1.25"/><rect x="17" y="25.99" width="9" height="1.25"/><rect x="19" y="33.53" width="7" height="1.25"/><rect x="12" y="41.08" width="14" height="1.25"/><rect x="19" y="48.62" width="7" height="1.25"/><rect x="17" y="56.17" width="9" height="1.25"/><rect x="19" y="63.71" width="7" height="1.25"/><rect x="3" y="71.26" width="23" height="1.25"/><rect x="19" y="78.80" width="7" height="1.25"/><rect x="17" y="86.35" width="9" height="1.25"/><rect x="19" y="93.89" width="7" height="1.25"/><rect x="12" y="101.44" width="14" height="1.25"/><rect x="19" y="108.98" width="7" height="1.25"/><rect x="17" y="116.53" width="9" height="1.25"/><rect x="19" y="124.07" width="7" height="1.25"/><rect x="3" y="131.62" width="23" height="1.25"/><rect x="19" y="139.16" width="7" height="1.25"/><rect x="17" y="146.71" width="9" height="1.25"/><rect x="19" y="154.25" width="7" height="1.25"/><rect x="12" y="161.80" width="14" height="1.25"/><rect x="19" y="169.34" width="7" height="1.25"/><rect x="17" y="176.89" width="9" height="1.25"/><rect x="19" y="184.43" width="7" height="1.25"/><rect x="3" y="191.98" width="23" height="1.25"/><rect x="19" y="199.52" width="7" height="1.25"/><rect x="17" y="207.07" width="9" height="1.25"/><rect x="19" y="214.62" width="7" height="1.25"/><rect x="12" y="222.16" width="14" height="1.25"/><rect x="19" y="229.70" width="7" height="1.25"/><rect x="17" y="237.25" width="9" height="1.25"/><rect x="19" y="244.79" width="7" height="1.25"/><rect x="3" y="252.34" width="23" height="1.25"/><rect x="19" y="259.88" width="7" height="1.25"/><rect x="17" y="267.43" width="9" height="1.25"/><rect x="19" y="274.97" width="7" height="1.25"/><rect x="12" y="282.52" width="14" height="1.25"/><rect x="19" y="290.07" width="7" height="1.25"/><rect x="17" y="297.61" width="9" height="1.25"/><rect x="19" y="305.15" width="7" height="1.25"/><rect x="3" y="312.70" width="23" height="1.25"/><rect x="19" y="320.24" width="7" height="1.25"/><rect x="17" y="327.79" width="9" height="1.25"/><rect x="19" y="335.34" width="7" height="1.25"/><rect x="12" y="342.88" width="14" height="1.25"/><rect x="19" y="350.42" width="7" height="1.25"/><rect x="17" y="357.97" width="9" height="1.25"/><rect x="19" y="365.51" width="7" height="1.25"/><rect x="3" y="373.06" width="23" height="1.25"/><rect x="19" y="380.61" width="7" height="1.25"/><rect x="17" y="388.15" width="9" height="1.25"/><rect x="19" y="395.69" width="7" height="1.25"/><rect x="12" y="403.24" width="14" height="1.25"/><rect x="19" y="410.78" width="7" height="1.25"/><rect x="17" y="418.33" width="9" height="1.25"/><rect x="19" y="425.88" width="7" height="1.25"/><rect x="3" y="433.42" width="23" height="1.25"/><rect x="19" y="440.96" width="7" height="1.25"/><rect x="17" y="448.51" width="9" height="1.25"/><rect x="19" y="456.05" width="7" height="1.25"/><rect x="12" y="463.60" width="14" height="1.25"/><rect x="19" y="471.14" width="7" height="1.25"/><rect x="17" y="478.69" width="9" height="1.25"/><rect x="19" y="486.23" width="7" height="1.25"/><rect x="3" y="493.78" width="23" height="1.25"/><rect x="19" y="501.33" width="7" height="1.25"/><rect x="17" y="508.87" width="9" height="1.25"/><rect x="19" y="516.41" width="7" height="1.25"/><rect x="12" y="523.96" width="14" height="1.25"/><rect x="19" y="531.50" width="7" height="1.25"/><rect x="17" y="539.05" width="9" height="1.25"/><rect x="19" y="546.60" width="7" height="1.25"/><rect x="3" y="554.14" width="23" height="1.25"/><rect x="19" y="561.68" width="7" height="1.25"/><rect x="17" y="569.23" width="9" height="1.25"/><rect x="19" y="576.77" width="7" height="1.25"/><rect x="12" y="584.32" width="14" height="1.25"/><rect x="19" y="591.87" width="7" height="1.25"/><rect x="17" y="599.41" width="9" height="1.25"/><rect x="19" y="606.95" width="7" height="1.25"/><rect x="3" y="614.50" width="23" height="1.25"/><rect x="19" y="622.04" width="7" height="1.25"/><rect x="19" y="629.59" width="7" height="1.25"/><rect x="19" y="637.13" width="7" height="1.25"/><rect x="12" y="644.68" width="14" height="1.25"/><rect x="19" y="652.23" width="7" height="1.25"/><rect x="17" y="659.77" width="9" height="1.25"/><rect x="19" y="667.31" width="7" height="1.25"/><rect x="3" y="674.86" width="23" height="1.25"/><rect x="19" y="682.40" width="7" height="1.25"/><rect x="19" y="689.95" width="7" height="1.25"/><rect x="19" y="697.50" width="7" height="1.25"/><rect x="12" y="705.04" width="14" height="1.25"/><rect x="19" y="712.58" width="7" height="1.25"/><rect x="17" y="720.13" width="9" height="1.25"/></g></svg>
<span class="t" style="transform:scaleX(1.0877);left:201.50px;top:262.27px;font-size:13.5px;color:#5A4A3A;">0</span>
<span class="t" style="transform:scaleX(1.0877);left:201.50px;top:322.63px;font-size:13.5px;color:#5A4A3A;">1</span>
<span class="t" style="transform:scaleX(1.0877);left:201.50px;top:382.99px;font-size:13.5px;color:#5A4A3A;">2</span>
<span class="t" style="transform:scaleX(1.0877);left:201.50px;top:443.35px;font-size:13.5px;color:#5A4A3A;">3</span>
<span class="t" style="transform:scaleX(1.0877);left:201.50px;top:503.71px;font-size:13.5px;color:#5A4A3A;">4</span>
<span class="t" style="transform:scaleX(1.0877);left:201.50px;top:564.07px;font-size:13.5px;color:#5A4A3A;">5</span>
<span class="t" style="transform:scaleX(1.0877);left:201.50px;top:624.43px;font-size:13.5px;color:#5A4A3A;">6</span>
<span class="t" style="transform:scaleX(1.0877);left:201.50px;top:684.79px;font-size:13.5px;color:#5A4A3A;">7</span>
<span class="t" style="transform:scaleX(1.0877);left:201.50px;top:745.15px;font-size:13.5px;color:#5A4A3A;">8</span>
<span class="t" style="transform:scaleX(1.0877);left:201.50px;top:805.51px;font-size:13.5px;color:#5A4A3A;">9</span>
<span class="t" style="transform:scaleX(0.8601);left:204.00px;top:865.87px;font-size:13.5px;color:#5A4A3A;">10</span>
<span class="t" style="transform:scaleX(0.9277);left:204.00px;top:926.23px;font-size:13.5px;color:#5A4A3A;">11</span>
<div class="a" style="left:223px;top:246px;width:2px;height:721px;background:#C8C8C8;"></div>
<div class="a" style="left:225px;top:272px;width:6px;height:633px;background:#FFFFFF;"></div>
<div class="a" style="left:790px;top:700px;width:516px;height:222px;background:#FFFFFF;border:1px solid #BEBEBE;"></div>
<div class="a" style="left:805px;top:700px;width:484px;height:204px;background:#5B9BD5;border:2.5px solid #000;"></div>
<div class="a" style="left:1898px;top:213px;width:10px;height:21px;background:#FFF;border:1.5px solid #ABABAB;"></div>
<div class="a" style="left:1898px;top:390px;width:10px;height:350px;background:#FFF;border:1.5px solid #ABABAB;"></div>
<div class="a" style="left:1898px;top:895px;width:10px;height:20px;background:#FFF;border:1.5px solid #D0D0D0;"></div>
<div class="a" style="left:1898px;top:918px;width:10px;height:20px;background:#F6F6F6;border:1px solid #E0E0E0;"></div>
<div class="a" style="left:1898px;top:941px;width:10px;height:22px;background:#F6F6F6;border:1px solid #E0E0E0;"></div>
<div class="a" style="left:200px;top:968px;width:21px;height:21px;background:#FFF;border:1.5px solid #ABABAB;"></div>
<svg class="a" style="left:206px;top:974px;" width="6" height="9" viewBox="0 0 6 9"><path d="M5 0V9L0 4.5Z" fill="#777"/></svg>
<div class="a" style="left:413px;top:968px;width:1267px;height:21px;background:#FFF;border:1.5px solid #ABABAB;"></div>
<div class="a" style="left:1872px;top:968px;width:21px;height:21px;background:#FFF;border:1.5px solid #ABABAB;"></div>
<svg class="a" style="left:1881px;top:974px;" width="6" height="9" viewBox="0 0 6 9"><path d="M0 0V9L5 4.5Z" fill="#777"/></svg>
<span class="t" style="transform:scaleX(0.9911);left:14.00px;top:997.30px;font-size:15px;color:#7A7A7A;">Page: 1 of 3</span>
<div class="a" style="left:122px;top:998px;width:20px;height:14px;border:1.5px solid #8A8A8A;"></div>
<span class="t" style="transform:scaleX(1.0568);left:150.00px;top:997.30px;font-size:15px;color:#7A7A7A;">0.26, 0.26 in</span>
<div class="a" style="left:274px;top:998px;width:20px;height:14px;background:#A8A8A8;border:1.5px solid #777;"></div>
<span class="t" style="transform:scaleX(1.0364);left:276.00px;top:1000.53px;font-size:10px;color:#F0F0F0;font-weight:700;">XY</span>
<span class="t" style="transform:scaleX(1.0594);left:299.00px;top:997.30px;font-size:15px;color:#7A7A7A;">7.98 x 10.47 in</span>
<div class="a" style="left:1536px;top:992px;width:54px;height:15px;background:#C6C6C6;"></div>
<div class="a" style="left:1553px;top:997px;width:18px;height:12px;background:#F0F0F0;border:1.5px solid #666;"></div>
<div class="a" style="left:1556px;top:1001px;width:12px;height:1px;background:#777;"></div>
<div class="a" style="left:1556px;top:1004px;width:12px;height:1px;background:#777;"></div>
<div class="a" style="left:1607px;top:997px;width:18px;height:12px;background:#F8F8F8;border:1.5px solid #666;"></div>
<div class="a" style="left:1609px;top:1001px;width:14px;height:1px;background:#777;"></div>
<div class="a" style="left:1609px;top:1004px;width:14px;height:1px;background:#777;"></div>
<div class="a" style="left:1612px;top:999px;width:1px;height:8px;background:#777;"></div>
<div class="a" style="left:1650px;top:1005px;width:9px;height:2px;background:#666;"></div>
<div class="a" style="left:1664px;top:1004px;width:140px;height:1px;background:#999;"></div>
<div class="a" style="left:1691px;top:997px;width:5px;height:10px;background:#666;"></div>
<div class="a" style="left:1733px;top:1001px;width:1px;height:5px;background:#999;"></div>
<div class="a" style="left:1810px;top:1004px;width:13px;height:2px;background:#666;"></div>
<div class="a" style="left:1816px;top:998px;width:2px;height:9px;background:#666;"></div>
<span class="t" style="transform:scaleX(1.0059);left:1842.00px;top:997.30px;font-size:15px;color:#7A7A7A;">45%</span>
<div class="a" style="left:1893px;top:996px;width:14px;height:12px;border:1.5px solid #666;"></div>
<svg class="a" style="left:37px;top:966px;" width="23" height="23" viewBox="0 0 23 23"><defs><linearGradient id="lg" x1="1" y1="0" x2="0" y2="1"><stop offset="0" stop-color="#22BDF6"/><stop offset="1" stop-color="#1A6FE6"/></linearGradient></defs><rect x="0" y="0" width="23" height="23" rx="5" fill="url(#lg)"/><path d="M6 5.5H17V9H13.3V18.5H9.7V9H6Z" fill="#FFF"/></svg>
<span class="t" style="transform:scaleX(1.0588);left:66.00px;top:968.79px;font-size:17.5px;color:#000;font-weight:700;">TEMPLATE</span>
<span class="t" style="transform:scaleX(1.0656);left:163.00px;top:968.79px;font-size:17.5px;color:#000;">.NET</span>
<div class="a" style="left:607px;top:119px;width:707px;height:750px;background:#2C84EA;box-shadow:0 0 18px 4px rgba(60,50,20,0.16);"></div>
<div class="a" style="left:617px;top:129px;width:687px;height:730px;background:#F0F0F0;"></div>
<div class="a" style="left:617px;top:129px;width:687px;height:39px;background:#FFFFFF;"></div>
<div class="a" style="left:617px;top:168px;width:1px;height:691px;background:#8C8C8C;"></div>
<span class="t" style="transform:scaleX(1.0519);left:630.00px;top:139.06px;font-size:16px;color:#000;">Format AutoShape</span>
<span class="t" style="transform:scaleX(0.9118);left:1209.00px;top:138.03px;font-size:16.5px;color:#000;font-weight:700;">?</span>
<svg class="a" style="left:1268px;top:138px;" width="16" height="15" viewBox="0 0 16 15"><path d="M1 0.5L15 14.5M15 0.5L1 14.5" stroke="#111" stroke-width="1.3"/></svg>
<div class="a" style="left:627px;top:207px;width:670px;height:602px;background:#FFFFFF;border:1px solid #D9D9D9;"></div>
<div class="a" style="left:773px;top:181px;width:74px;height:26px;background:#F0F0F0;border:1px solid #D2D2D2;border-bottom:none;"></div>
<div class="a" style="left:846px;top:181px;width:77px;height:26px;background:#F0F0F0;border:1px solid #D2D2D2;border-bottom:none;"></div>
<div class="a" style="left:922px;top:181px;width:77px;height:26px;background:#F0F0F0;border:1px solid #D2D2D2;border-bottom:none;"></div>
<div class="a" style="left:627px;top:178px;width:147px;height:31px;background:#FFFFFF;border:1px solid #D9D9D9;border-bottom:none;"></div>
<span class="t" style="transform:scaleX(1.0390);left:640.40px;top:187.25px;font-size:15.3px;color:#000;">Colors and Lines</span>
<span class="t" style="transform:scaleX(0.9635);left:795.30px;top:187.85px;font-size:15.3px;color:#000;">Size</span>
<span class="t" style="transform:scaleX(1.0511);left:861.50px;top:187.85px;font-size:15.3px;color:#000;">Layout</span>
<span class="t" style="transform:scaleX(1.0993);left:934.40px;top:187.85px;font-size:15.3px;color:#000;">Alt Text</span>
<span class="t" style="transform:scaleX(1.0370);left:640.40px;top:223.55px;font-size:15.3px;color:#000;">Fill</span>
<div class="a" style="left:667px;top:230px;width:620px;height:1px;background:#DCDCDC;"></div>
<span class="t" style="transform:scaleX(1.0609);left:652.30px;top:258.55px;font-size:15.3px;color:#000;">Color:</span>
<div class="a" style="left:652.5px;top:273.5px;width:9px;height:1.2px;background:#000;"></div>
<div class="a" style="left:785px;top:251px;width:192px;height:28px;background:#FFFFFF;border:2px solid #B4B4B4;"></div>
<div class="a" style="left:952px;top:253px;width:23px;height:24px;background:#E1E1E1;border-left:1px solid #C8C8C8;"></div>
<svg class="a" style="left:958px;top:262px;" width="12" height="7" viewBox="0 0 12 7"><path d="M1 1L6 6L11 1" fill="none" stroke="#555" stroke-width="1.1"/></svg>
<span class="t" style="transform:scaleX(1.0924);left:836.40px;top:257.45px;font-size:15.3px;color:#000;">No Color</span>
<div class="a" style="left:989px;top:249px;width:110px;height:31px;background:#E1E1E1;border:2px solid #ADADAD;"></div>
<span class="t" style="transform:scaleX(1.0317);left:1001.00px;top:256.75px;font-size:15.3px;color:#000;">Fill Effects...</span>
<div class="a" style="left:1012.5px;top:272.5px;width:4.5px;height:1.2px;background:#000;"></div>
<span class="t" style="transform:scaleX(1.0251);left:652.30px;top:291.85px;font-size:15.3px;color:#8C8C8C;">Transparency:</span>
<div class="a" style="left:785px;top:287px;width:96px;height:21.5px;background:#F0F0F0;"></div>
<svg class="a" style="left:793px;top:292px;" width="8" height="11" viewBox="0 0 8 11"><path d="M6 1L1.5 5.5L6 10" fill="none" stroke="#B0B0B0" stroke-width="2"/></svg>
<svg class="a" style="left:865px;top:292px;" width="8" height="11" viewBox="0 0 8 11"><path d="M2 1L6.5 5.5L2 10" fill="none" stroke="#B0B0B0" stroke-width="2"/></svg>
<div class="a" style="left:894px;top:286px;width:83px;height:27.5px;background:#FFFFFF;border:1.5px solid #B4B4B4;"></div>
<div class="a" style="left:953px;top:288px;width:21px;height:11.75px;background:#F3F3F3;border:1px solid #CFCFCF;"></div>
<div class="a" style="left:953px;top:299.75px;width:21px;height:11.75px;background:#F3F3F3;border:1px solid #CFCFCF;"></div>
<svg class="a" style="left:959px;top:292px;" width="10" height="15.5" viewBox="0 0 10 15.5"><path d="M0 5H9L4.5 0Z" fill="#A0A0A0"/><path d="M0 10.5H9L4.5 15.5Z" fill="#A0A0A0"/></svg>
<span class="t" style="transform:scaleX(0.9946);left:897.70px;top:291.85px;font-size:15.3px;color:#9A9A9A;">0 %</span>
<span class="t" style="transform:scaleX(1.0326);left:639.80px;top:327.45px;font-size:15.3px;color:#000;">Line</span>
<div class="a" style="left:676px;top:334px;width:301px;height:1px;background:#DCDCDC;"></div>
<span class="t" style="transform:scaleX(1.0609);left:652.30px;top:359.75px;font-size:15.3px;color:#000;">Color:</span>
<div class="a" style="left:662px;top:374.5px;width:8px;height:1.2px;background:#000;"></div>
<div class="a" style="left:785px;top:353px;width:192px;height:28px;background:#FFFFFF;border:2px solid #B4B4B4;"></div>
<div class="a" style="left:952px;top:355px;width:23px;height:24px;background:#E1E1E1;border-left:1px solid #C8C8C8;"></div>
<svg class="a" style="left:958px;top:364px;" width="12" height="7" viewBox="0 0 12 7"><path d="M1 1L6 6L11 1" fill="none" stroke="#555" stroke-width="1.1"/></svg>
<span class="t" style="transform:scaleX(1.0924);left:836.30px;top:359.75px;font-size:15.3px;color:#000;">No Color</span>
<span class="t" style="transform:scaleX(1.0209);left:652.30px;top:397.45px;font-size:15.3px;color:#000;">Transparency:</span>
<div class="a" style="left:660px;top:412.5px;width:6.5px;height:1.2px;background:#000;"></div>
<div class="a" style="left:785px;top:392px;width:96px;height:22.5px;background:#F0F0F0;"></div>
<div class="a" style="left:809px;top:392px;width:24px;height:21px;background:#C8C8C8;"></div>
<svg class="a" style="left:793px;top:398px;" width="8" height="11" viewBox="0 0 8 11"><path d="M6 1L1.5 5.5L6 10" fill="none" stroke="#333" stroke-width="2"/></svg>
<svg class="a" style="left:865px;top:398px;" width="8" height="11" viewBox="0 0 8 11"><path d="M2 1L6.5 5.5L2 10" fill="none" stroke="#333" stroke-width="2"/></svg>
<div class="a" style="left:894px;top:391.5px;width:83px;height:27.5px;background:#FFFFFF;border:1.5px solid #B4B4B4;"></div>
<div class="a" style="left:953px;top:393.5px;width:21px;height:11.75px;background:#F3F3F3;border:1px solid #CFCFCF;"></div>
<div class="a" style="left:953px;top:405.25px;width:21px;height:11.75px;background:#F3F3F3;border:1px solid #CFCFCF;"></div>
<svg class="a" style="left:959px;top:397px;" width="10" height="15.5" viewBox="0 0 10 15.5"><path d="M0 5H9L4.5 0Z" fill="#222"/><path d="M0 10.5H9L4.5 15.5Z" fill="#222"/></svg>
<span class="t" style="transform:scaleX(0.9946);left:897.70px;top:397.05px;font-size:15.3px;color:#000;">0 %</span>
<span class="t" style="transform:scaleX(1.1321);left:652.30px;top:435.05px;font-size:15.3px;color:#000;">Width:</span>
<div class="a" style="left:652.5px;top:450px;width:13px;height:1.2px;background:#000;"></div>
<div class="a" style="left:785px;top:429px;width:192px;height:28px;background:#FFFFFF;border:1.5px solid #B4B4B4;"></div>
<div class="a" style="left:953px;top:431px;width:21px;height:12.0px;background:#F3F3F3;border:1px solid #CFCFCF;"></div>
<div class="a" style="left:953px;top:443.0px;width:21px;height:12.0px;background:#F3F3F3;border:1px solid #CFCFCF;"></div>
<svg class="a" style="left:959px;top:435px;" width="10" height="16" viewBox="0 0 10 16"><path d="M0 5H9L4.5 0Z" fill="#222"/><path d="M0 11H9L4.5 16Z" fill="#222"/></svg>
<span class="t" style="transform:scaleX(1.0794);left:790.00px;top:435.05px;font-size:15.3px;color:#000;">4.5 pt</span>
<span class="t" style="transform:scaleX(1.0754);left:652.30px;top:473.85px;font-size:15.3px;color:#000;">Compound type:</span>
<div class="a" style="left:672.7px;top:489.5px;width:11px;height:1.2px;background:#000;"></div>
<div class="a" style="left:785px;top:467px;width:192px;height:31px;background:#FFFFFF;border:2px solid #B4B4B4;"></div>
<div class="a" style="left:952px;top:469px;width:23px;height:27px;background:#E1E1E1;border-left:1px solid #C8C8C8;"></div>
<svg class="a" style="left:958px;top:479px;" width="12" height="7" viewBox="0 0 12 7"><path d="M1 1L6 6L11 1" fill="none" stroke="#555" stroke-width="1.1"/></svg>
<div class="a" style="left:805px;top:478px;width:129px;height:8px;background:#000;"></div>
<span class="t" style="transform:scaleX(1.0320);left:652.30px;top:514.75px;font-size:15.3px;color:#000;">Dash type:</span>
<div class="a" style="left:652.5px;top:530px;width:10px;height:1.2px;background:#000;"></div>
<div class="a" style="left:785px;top:507.5px;width:192px;height:30px;background:#FFFFFF;border:2px solid #B4B4B4;"></div>
<div class="a" style="left:952px;top:509.5px;width:23px;height:26px;background:#E1E1E1;border-left:1px solid #C8C8C8;"></div>
<svg class="a" style="left:958px;top:519px;" width="12" height="7" viewBox="0 0 12 7"><path d="M1 1L6 6L11 1" fill="none" stroke="#555" stroke-width="1.1"/></svg>
<div class="a" style="left:805px;top:520px;width:129px;height:4px;background:#000;"></div>
<span class="t" style="transform:scaleX(1.0271);left:652.40px;top:555.55px;font-size:15.3px;color:#000;">Cap type:</span>
<div class="a" style="left:670px;top:570.5px;width:9.5px;height:1.2px;background:#000;"></div>
<div class="a" style="left:785px;top:548px;width:192px;height:31px;background:#FFFFFF;border:2px solid #B4B4B4;"></div>
<div class="a" style="left:952px;top:550px;width:23px;height:27px;background:#E1E1E1;border-left:1px solid #C8C8C8;"></div>
<svg class="a" style="left:958px;top:560px;" width="12" height="7" viewBox="0 0 12 7"><path d="M1 1L6 6L11 1" fill="none" stroke="#555" stroke-width="1.1"/></svg>
<div class="a" style="left:787.5px;top:554px;width:162.5px;height:17.5px;background:#0078D7;outline:1px dotted #F0A030;outline-offset:-1px;"></div>
<span class="t" style="transform:scaleX(1.0877);left:792.00px;top:555.55px;font-size:15.3px;color:#FFFFFF;">Round</span>
<span class="t" style="transform:scaleX(1.0426);left:652.40px;top:596.05px;font-size:15.3px;color:#8C8C8C;">Join type:</span>
<div class="a" style="left:785px;top:589px;width:192px;height:30.5px;background:#F0F0F0;border:2px solid #B4B4B4;"></div>
<div class="a" style="left:952px;top:591px;width:23px;height:26.5px;background:#DADADA;border-left:1px solid #C8C8C8;"></div>
<svg class="a" style="left:958px;top:601px;" width="12" height="7" viewBox="0 0 12 7"><path d="M1 1L6 6L11 1" fill="none" stroke="#B8B8B8" stroke-width="1.1"/></svg>
<span class="t" style="transform:scaleX(1.1289);left:792.00px;top:596.05px;font-size:15.3px;color:#8C8C8C;">Miter</span>
<div class="a" style="left:785px;top:629px;width:190px;height:31px;background:#E1E1E1;border:2px solid #ADADAD;"></div>
<span class="t" style="transform:scaleX(1.0468);left:839.10px;top:636.55px;font-size:15.3px;color:#000;">BorderArt...</span>
<div class="a" style="left:839.1px;top:652px;width:7.5px;height:1.2px;background:#000;"></div>
<span class="t" style="transform:scaleX(1.0267);left:1005.30px;top:327.05px;font-size:15.3px;color:#000;">Preview</span>
<div class="a" style="left:1067px;top:334px;width:203px;height:1px;background:#DCDCDC;"></div>
<div class="a" style="left:1089px;top:353px;width:177px;height:177px;background:#FFFFFF;border:1px solid #8A8A8A;border-right:2px solid #8A8A8A;border-bottom:2px solid #8A8A8A;"></div>
<div class="a" style="left:1112.5px;top:377px;width:133px;height:132px;border:8px solid #000;"></div>
<svg class="a" style="left:1098px;top:363px;" width="161" height="159" viewBox="0 0 161 159"><g fill="none" stroke="#999" stroke-width="1"><path d="M0.5 10.5H11.5V0"/><path d="M160 10.5H149.5V0"/><path d="M0.5 147.5H11.5V158"/><path d="M160 147.5H149.5V158"/></g></svg>
<div class="a" style="left:1019px;top:354px;width:36px;height:36px;background:#CCE4F7;border:1.5px solid #2F66B3;"></div>
<svg class="a" style="left:1027px;top:362px;" width="20" height="20" viewBox="0 0 20 20"><g stroke="#666" stroke-width="1" stroke-dasharray="1 1" fill="none"><rect x="0.5" y="0.5" width="19" height="19"/><path d="M10 0V20M0 10H20"/></g><path d="M0 0.75H20" stroke="#444" stroke-width="1.5"/></svg>
<div class="a" style="left:1019px;top:492px;width:36px;height:36px;background:#CCE4F7;border:1.5px solid #2F66B3;"></div>
<svg class="a" style="left:1027px;top:500px;" width="20" height="20" viewBox="0 0 20 20"><g stroke="#666" stroke-width="1" stroke-dasharray="1 1" fill="none"><rect x="0.5" y="0.5" width="19" height="19"/><path d="M10 0V20M0 10H20"/></g><path d="M0 19.25H20" stroke="#444" stroke-width="1.5"/></svg>
<div class="a" style="left:1088px;top:561px;width:36px;height:36px;background:#CCE4F7;border:1.5px solid #2F66B3;"></div>
<svg class="a" style="left:1096px;top:569px;" width="20" height="20" viewBox="0 0 20 20"><g stroke="#666" stroke-width="1" stroke-dasharray="1 1" fill="none"><rect x="0.5" y="0.5" width="19" height="19"/><path d="M10 0V20M0 10H20"/></g><path d="M0.75 0V20" stroke="#444" stroke-width="1.5"/></svg>
<div class="a" style="left:1225px;top:561px;width:36px;height:36px;background:#CCE4F7;border:1.5px solid #2F66B3;"></div>
<svg class="a" style="left:1233px;top:569px;" width="20" height="20" viewBox="0 0 20 20"><g stroke="#666" stroke-width="1" stroke-dasharray="1 1" fill="none"><rect x="0.5" y="0.5" width="19" height="19"/><path d="M10 0V20M0 10H20"/></g><path d="M19.25 0V20" stroke="#444" stroke-width="1.5"/></svg>
<span class="t" style="transform:scaleX(0.9677);left:1005.50px;top:612.05px;font-size:15.3px;color:#000;">Presets</span>
<div class="a" style="left:1062px;top:618px;width:208px;height:1px;background:#DCDCDC;"></div>
<div class="a" style="left:1088px;top:639px;width:36px;height:37px;background:#E1E1E1;border:1.5px solid #ADADAD;"></div>
<svg class="a" style="left:1096px;top:647px;" width="20" height="20" viewBox="0 0 20 20"><g stroke="#555" stroke-width="1" stroke-dasharray="1 1" fill="none"><rect x="0.5" y="0.5" width="18" height="18"/><path d="M9.5 0V19M0 9.5H19"/></g></svg>
<div class="a" style="left:1157px;top:639px;width:36px;height:37px;background:#E1E1E1;border:1.5px solid #ADADAD;"></div>
<svg class="a" style="left:1165px;top:647px;" width="20" height="20" viewBox="0 0 20 20"><rect x="0.75" y="0.75" width="17.5" height="17.5" fill="#FFF" stroke="#555" stroke-width="1.5"/><g stroke="#555" stroke-width="1" stroke-dasharray="1 1" fill="none"><path d="M9.5 2V17M2 9.5H17"/></g></svg>
<span class="t" style="transform:scaleX(1.0536);left:1005.50px;top:690.15px;font-size:15.3px;color:#000;">Under Preview, select the borders</span>
<span class="t" style="transform:scaleX(1.0791);left:1005.50px;top:708.25px;font-size:15.3px;color:#000;">you want to change, and then select</span>
<span class="t" style="transform:scaleX(1.0772);left:1005.50px;top:726.25px;font-size:15.3px;color:#000;">the color and line styles you want.</span>
<div class="a" style="left:639px;top:749px;width:19px;height:18px;background:#FFF;border:1.5px solid #333;"></div>
<span class="t" style="transform:scaleX(1.0715);left:664.20px;top:751.05px;font-size:15.3px;color:#000;">Draw border inside frame</span>
<div class="a" style="left:807.5px;top:766px;width:5px;height:1.2px;background:#000;"></div>
<div class="a" style="left:639px;top:775px;width:19px;height:18px;background:#FFF;border:1.5px solid #333;"></div>
<span class="t" style="transform:scaleX(1.0778);left:663.50px;top:777.85px;font-size:15.3px;color:#000;">Apply settings to new AutoShapes</span>
<div class="a" style="left:663.5px;top:793px;width:10px;height:1.2px;background:#000;"></div>
<div class="a" style="left:627px;top:822px;width:133px;height:31px;background:#E1E1E1;border:1.5px solid #ADADAD;"></div>
<span class="t" style="transform:scaleX(1.0235);left:638.00px;top:830.05px;font-size:15.3px;color:#000;">Shape Effects...</span>
<div class="a" style="left:638px;top:844.5px;width:8px;height:1.2px;background:#000;"></div>
<div class="a" style="left:1076px;top:822px;width:104px;height:31px;background:#E1E1E1;border:2px solid #0078D7;"></div>
<span class="t" style="transform:scaleX(0.9672);left:1118.00px;top:829.65px;font-size:15.3px;color:#000;">OK</span>
<div class="a" style="left:1195px;top:822px;width:104px;height:31px;background:#E1E1E1;border:1.5px solid #ADADAD;"></div>
<span class="t" style="transform:scaleX(0.9978);left:1223.50px;top:829.65px;font-size:15.3px;color:#000;">Cancel</span>
<svg class="a" style="left:370px;top:520px;" width="240" height="125" viewBox="0 0 240 125"><path d="M12.5 79.5 Q95 56 188.2 35 L183.5 10.5 L223.5 23.5 L202 59.5 L190.5 40 Q110 70 24 109.5 Z" fill="#2C84EA" stroke="#2C84EA" stroke-width="6" stroke-linejoin="round"/></svg>
<div class="a" style="left:0;top:0;width:1920px;height:15px;background:#2C84EA"></div>
<div class="a" style="left:0;top:0;width:15px;height:1022px;background:#2C84EA"></div>
<div class="a" style="left:1905px;top:0;width:15px;height:1022px;background:#2C84EA"></div>
<div class="a" style="left:0;top:1007px;width:1920px;height:15px;background:#2C84EA"></div>

</body></html>
